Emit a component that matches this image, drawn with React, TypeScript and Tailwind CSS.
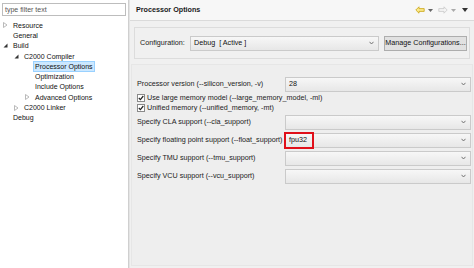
import React from "react";

const font = { fontFamily: '"Liberation Sans", Arial, sans-serif' };

function Chevron() {
  return (
    <svg width="5" height="4" viewBox="0 0 5 4" className="shrink-0">
      <path d="M0.5 0.8 L2.5 3 L4.5 0.8" fill="none" stroke="#666" strokeWidth="0.9" />
    </svg>
  );
}

function Select({ value, className = "" }: { value?: string; className?: string }) {
  return (
    <div
      className={`flex items-center justify-between h-[15px] border border-[#cacaca] bg-gradient-to-b from-[#f7f7f7] to-[#e7e7e7] pl-[3px] pr-[4px] ${className}`}
    >
      <span className="text-[7.2px] leading-none text-[#111] whitespace-pre">{value ?? ""}</span>
      <Chevron />
    </div>
  );
}

function Collapsed() {
  return (
    <svg width="5" height="6" viewBox="0 0 5 6" className="shrink-0">
      <path d="M0.5 0.5 L4 3 L0.5 5.5 Z" fill="none" stroke="#a8a8a8" strokeWidth="0.8" />
    </svg>
  );
}

function Expanded() {
  return (
    <svg width="5" height="5" viewBox="0 0 5 5" className="shrink-0">
      <path d="M4.5 0.5 L4.5 4.5 L0.5 4.5 Z" fill="#333" />
    </svg>
  );
}

function TreeItem({
  level,
  icon,
  label,
  selected,
}: {
  level: number;
  icon?: "c" | "e";
  label: string;
  selected?: boolean;
}) {
  return (
    <div className="flex items-center h-[10.3px] whitespace-nowrap" style={{ paddingLeft: 3 + level * 11 }}>
      <div className="w-[8px] shrink-0 flex items-center justify-start">
        {icon === "c" ? <Collapsed /> : icon === "e" ? <Expanded /> : null}
      </div>
      <span
        className={`text-[7px] leading-none text-[#111] px-[1px] py-[1px] ${
          selected ? "bg-[#cce8ff] border border-[#99d1ff]" : "border border-transparent"
        }`}
      >
        {label}
      </span>
    </div>
  );
}

function CheckBox() {
  return (
    <div className="w-[8px] h-[8px] border border-[#8a8a8a] bg-white flex items-center justify-center shrink-0">
      <svg width="6" height="6" viewBox="0 0 6 6">
        <path d="M0.8 3 L2.4 4.6 L5.3 1" fill="none" stroke="#222" strokeWidth="1.2" />
      </svg>
    </div>
  );
}

function OptionRow({ label, value, highlight }: { label: string; value?: string; highlight?: boolean }) {
  return (
    <div className="flex items-center h-[18px]">
      <div className="w-[153px] shrink-0 pl-[5px] text-[7.2px] text-[#222] leading-none whitespace-nowrap">{label}</div>
      <div className="relative flex-1 pr-[1px]">
        <Select value={value} />
        {highlight && (
          <div className="absolute left-[-1px] top-[-1px] w-[30px] h-[17px] border-[2px] border-[#e0101a]" />
        )}
      </div>
    </div>
  );
}

export default function App() {
  return (
    <div className="w-[474px] h-[268px] flex bg-[#f0f0f0] overflow-hidden" style={font}>
      {/* Left tree */}
      <div className="w-[129px] shrink-0 h-full bg-white border-r border-[#cfcfcf] flex flex-col">
        <div className="ml-[2px] mr-[2px] mt-[3px] h-[13px] border border-[#bdbdbd] flex items-center px-[2px]">
          <span className="text-[7px] leading-none text-[#555]">type filter text</span>
        </div>
        <div className="mt-[4px] flex flex-col">
          <TreeItem level={0} icon="c" label="Resource" />
          <TreeItem level={0} label="General" />
          <TreeItem level={0} icon="e" label="Build" />
          <TreeItem level={1} icon="e" label="C2000 Compiler" />
          <TreeItem level={2} label="Processor Options" selected />
          <TreeItem level={2} label="Optimization" />
          <TreeItem level={2} label="Include Options" />
          <TreeItem level={2} icon="c" label="Advanced Options" />
          <TreeItem level={1} icon="c" label="C2000 Linker" />
          <TreeItem level={0} label="Debug" />
        </div>
      </div>

      {/* Right pane */}
      <div className="flex-1 min-w-0 h-full flex flex-col border-l border-[#e4e4e4]">
        <div className="h-[21px] shrink-0 flex items-center justify-between pl-[6px] pr-[6px] bg-[#f7f7f7] border-b border-[#dadada]">
          <span className="text-[7.2px] font-bold text-[#1a1a1a] leading-none">Processor Options</span>
          <div className="flex items-center gap-[3px]">
            <svg width="10" height="8" viewBox="0 0 10 8">
              <path d="M0.8 4 L4 0.8 L4 2.6 L9.2 2.6 L9.2 5.4 L4 5.4 L4 7.2 Z" fill="#fbe98a" stroke="#c9a514" strokeWidth="0.8" />
            </svg>
            <svg width="5" height="3" viewBox="0 0 5 3"><path d="M0 0 L5 0 L2.5 3 Z" fill="#666" /></svg>
            <svg width="10" height="8" viewBox="0 0 10 8" className="ml-[2px]">
              <path d="M9.2 4 L6 0.8 L6 2.6 L0.8 2.6 L0.8 5.4 L6 5.4 L6 7.2 Z" fill="#f4f4f4" stroke="#c8c8c8" strokeWidth="0.8" />
            </svg>
            <svg width="5" height="3" viewBox="0 0 5 3"><path d="M0 0 L5 0 L2.5 3 Z" fill="#aaa" /></svg>
            <svg width="6" height="4" viewBox="0 0 6 4" className="ml-[3px]"><path d="M0 0 L6 0 L3 4 Z" fill="#333" /></svg>
          </div>
        </div>

        {/* Configuration group */}
        <div className="mx-[4px] mt-[6px] h-[32px] shrink-0 border border-[#dcdcdc] flex items-center pl-[5px] pr-[2px]">
          <span className="text-[7.2px] text-[#222] leading-none w-[50px] shrink-0 whitespace-nowrap">Configuration:</span>
          <Select value="Debug  [ Active ]" className="w-[189px] shrink-0" />
          <div className="ml-[5px] w-[83px] shrink-0 h-[15px] flex items-center justify-center border border-[#adadad] bg-[#e1e1e1]">
            <span className="text-[7.2px] leading-none text-[#111] whitespace-nowrap">Manage Configurations...</span>
          </div>
        </div>

        {/* Options */}
        <div className="mx-[1px] mt-[5px] flex-1 mb-[2px] border border-[#e6e6e6] bg-[#eeeeee] flex flex-col pt-[10px]">
          <OptionRow label="Processor version (--silicon_version, -v)" value="28" />
          <div className="flex items-center gap-[2px] h-[10px] pl-[5px]">
            <CheckBox />
            <span className="text-[7.2px] text-[#222] leading-none whitespace-nowrap">Use large memory model (--large_memory_model, -ml)</span>
          </div>
          <div className="flex items-center gap-[2px] h-[10px] pl-[5px]">
            <CheckBox />
            <span className="text-[7.2px] text-[#222] leading-none whitespace-nowrap">Unified memory (--unified_memory, -mt)</span>
          </div>
          <OptionRow label="Specify CLA support (--cla_support)" />
          <OptionRow label="Specify floating point support (--float_support)" value="fpu32" highlight />
          <OptionRow label="Specify TMU support (--tmu_support)" />
          <OptionRow label="Specify VCU support (--vcu_support)" />
        </div>
      </div>
    </div>
  );
}
